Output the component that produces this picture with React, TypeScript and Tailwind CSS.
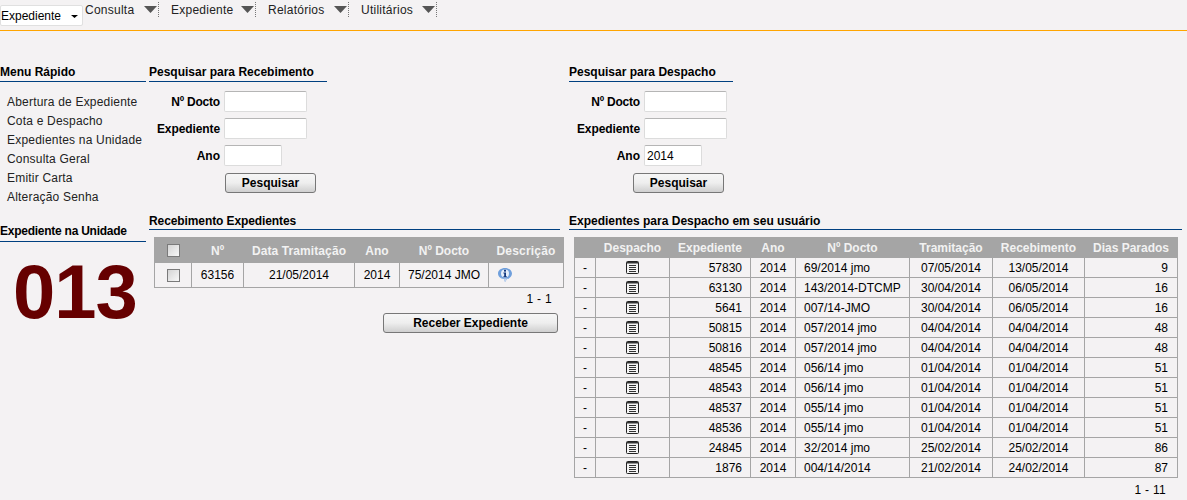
import React from "react"

const menus = [
  { label: "Consulta", w: "w-[74px]", ml: "ml-[2px]" },
  { label: "Expediente", w: "w-[85px]", ml: "ml-[12px]" },
  { label: "Relatórios", w: "w-[81px]", ml: "ml-[12px]" },
  { label: "Utilitários", w: "w-[76px]", ml: "ml-[12px]" },
]

const quickLinks = [
  "Abertura de Expediente",
  "Cota e Despacho",
  "Expedientes na Unidade",
  "Consulta Geral",
  "Emitir Carta",
  "Alteração Senha",
]

const despachos = [
  ["57830", "2014", "69/2014 jmo", "07/05/2014", "13/05/2014", "9"],
  ["63130", "2014", "143/2014-DTCMP", "30/04/2014", "06/05/2014", "16"],
  ["5641", "2014", "007/14-JMO", "30/04/2014", "06/05/2014", "16"],
  ["50815", "2014", "057/2014 jmo", "04/04/2014", "04/04/2014", "48"],
  ["50816", "2014", "057/2014 jmo", "04/04/2014", "04/04/2014", "48"],
  ["48545", "2014", "056/14 jmo", "01/04/2014", "01/04/2014", "51"],
  ["48543", "2014", "056/14 jmo", "01/04/2014", "01/04/2014", "51"],
  ["48537", "2014", "055/14 jmo", "01/04/2014", "01/04/2014", "51"],
  ["48536", "2014", "055/14 jmo", "01/04/2014", "01/04/2014", "51"],
  ["24845", "2014", "32/2014 jmo", "25/02/2014", "25/02/2014", "86"],
  ["1876", "2014", "004/14/2014", "21/02/2014", "24/02/2014", "87"],
]

function Caret() {
  return (
    <svg width="13" height="7" viewBox="0 0 13 7">
      <path d="M0 0H13L6.5 7Z" fill="#555" />
    </svg>
  )
}

function DocIcon() {
  return (
    <svg width="13" height="13" viewBox="0 0 13 13" className="mx-auto block">
      <rect x="0.5" y="0.5" width="12" height="12" rx="1" fill="#f4f4f4" stroke="#222" />
      <rect x="1" y="1" width="11" height="1.5" fill="#333" />
      <path d="M3 4.5H10M3 6.5H10M3 8.5H10M3 10.5H10" stroke="#333" strokeWidth="1" />
    </svg>
  )
}

function InfoIcon() {
  return (
    <svg width="16" height="16" viewBox="0 0 16 16" className="block">
      <path d="M8 1C12 1 15 3.4 15 6.6C15 9.6 12.4 11.6 10 12L8 15L7 12C3.6 11.8 1 9.6 1 6.6C1 3.4 4 1 8 1Z" fill="#6f9fdc" />
      <path d="M3 10C5 12 11 12 13 10L10 12L8 15L7 12Z" fill="#c3d6ef" />
      <circle cx="8" cy="6.4" r="4" fill="#e6eef9" />
      <rect x="7" y="2.8" width="2" height="1.8" fill="#12387f" />
      <path d="M6.4 5.4H9V9.2H9.8V10.2H6.4V9.2H7.2V6.4H6.4Z" fill="#12387f" />
    </svg>
  )
}

function Check() {
  return (
    <input
      type="checkbox"
      className="block mx-auto h-[13px] w-[13px] appearance-none border border-[#7a7a7a] bg-gradient-to-br from-[#d4d4d4] to-[#f8f8f8]"
    />
  )
}

function Button({ label, className }: { label: string; className: string }) {
  return (
    <button className={`h-[20px] rounded-[3px] border border-[#777] bg-gradient-to-b from-[#f6f6f6] via-[#eeeeee] to-[#cfcfcf] text-[12px] font-bold text-black ${className}`}>
      {label}
    </button>
  )
}

function SearchForm({ ano, buttonClass }: { ano?: string; buttonClass: string }) {
  return (
    <div className="mt-[9px]">
      <div className="grid grid-cols-[71px_auto] justify-start gap-x-[4px] gap-y-[6px] items-center">
        <label className="text-right font-bold tracking-[-0.2px]">Nº Docto</label>
        <input readOnly className="h-[21px] w-[83px] rounded-[2px] border border-[#dcdcdc] border-t-[#b5b5b5] bg-white px-[2px] outline-none" />
        <label className="text-right font-bold tracking-[-0.1px]">Expediente</label>
        <input readOnly className="h-[21px] w-[83px] rounded-[2px] border border-[#dcdcdc] border-t-[#b5b5b5] bg-white px-[2px] outline-none" />
        <label className="text-right font-bold">Ano</label>
        <input readOnly value={ano ?? ""} className="h-[21px] w-[58px] rounded-[2px] border border-[#dcdcdc] border-t-[#b5b5b5] bg-white px-[2px] text-[12px] outline-none" />
      </div>
      <Button label="Pesquisar" className={`mt-[7px] block w-[91px] ${buttonClass}`} />
    </div>
  )
}

export default function App() {
  return (
    <div className="h-[500px] overflow-hidden bg-[#f4f2f3] text-[12px] leading-[14px] text-black font-['Liberation_Sans',Arial,sans-serif]">
      <nav className="flex h-[31px] border-b border-[#ffa500] pt-[2px]">
        <div className="relative mt-[3px] h-[21px] w-[83px] rounded-[2px] border border-[#e0e0e0] bg-white pt-[3px]">
          Expediente
          <svg width="7" height="3" viewBox="0 0 7 3" className="absolute right-[4px] top-[9px]">
            <path d="M0 0H7L3.5 3Z" fill="#000" />
          </svg>
        </div>
        {menus.map((m) => (
          <div
            key={m.label}
            className={`flex h-[15px] items-center justify-between border-r border-dotted border-[#777] pr-[1px] ${m.w} ${m.ml}`}
          >
            <span className="tracking-[0.25px] text-[#222]">{m.label}</span>
            <Caret />
          </div>
        ))}
      </nav>

      <main className="flex">
        <aside className="w-[146px] shrink-0 pt-[33px]">
          <h2 className="h-[18px] border-b border-[#004080] pt-[1px] font-bold">Menu Rápido</h2>
          <ul className="mt-[11px] pl-[7px] tracking-[0.2px]">
            {quickLinks.map((l) => (
              <li key={l} className="h-[19px] leading-[19px] whitespace-nowrap text-[#222]">{l}</li>
            ))}
          </ul>
          <h2 className="mt-[16px] h-[19px] border-b border-[#004080] pt-[1px] font-bold tracking-[-0.25px] whitespace-nowrap">Expediente na Unidade</h2>
          <div className="mt-[12px] pl-[13px] text-[76px] leading-[76px] font-bold tracking-[-1px] text-[#660000]">013</div>
        </aside>

        <section className="ml-[3px] w-[414px] shrink-0 pt-[33px]">
          <h2 className="h-[18px] w-[178px] border-b border-[#004080] pt-[1px] font-bold">Pesquisar para Recebimento</h2>
          <SearchForm buttonClass="ml-[76px]" />
          <h2 className="mt-[20px] h-[17px] w-[411px] border-b border-[#004080] pt-[1px] font-bold tracking-[-0.1px]">Recebimento Expedientes</h2>
          <table className="mt-[7px] ml-[5px] w-[409px] table-fixed border-collapse text-center">
            <colgroup>
              <col className="w-[37px]" />
              <col className="w-[52px]" />
              <col className="w-[111px]" />
              <col className="w-[45px]" />
              <col className="w-[89px]" />
              <col className="w-[75px]" />
            </colgroup>
            <thead>
              <tr className="h-[25px] bg-[#a5a5a5] font-bold text-[#f2f2f2]">
                <th className="border border-[#a5a5a5]"><Check /></th>
                <th className="border border-[#a5a5a5] pt-[1px]">Nº</th>
                <th className="border border-[#a5a5a5] pt-[1px] tracking-[0.1px]">Data Tramitação</th>
                <th className="border border-[#a5a5a5] pt-[1px]">Ano</th>
                <th className="border border-[#a5a5a5] pt-[1px]">Nº Docto</th>
                <th className="border border-[#a5a5a5] pt-[1px] tracking-[0.2px]">Descrição</th>
              </tr>
            </thead>
            <tbody>
              <tr className="h-[25px]">
                <td className="border border-[#a5a5a5]"><Check /></td>
                <td className="border border-[#a5a5a5]">63156</td>
                <td className="border border-[#a5a5a5]">21/05/2014</td>
                <td className="border border-[#a5a5a5]">2014</td>
                <td className="border border-[#a5a5a5] whitespace-nowrap">75/2014 JMO</td>
                <td className="border border-[#a5a5a5] pl-[8px]"><InfoIcon /></td>
              </tr>
            </tbody>
          </table>
          <p className="mt-[4px] w-[403px] text-right tracking-[0.3px]">1 - 1</p>
          <Button label="Receber Expediente" className="ml-[234px] mt-[7px] block w-[175px]" />
        </section>

        <section className="ml-[6px] w-[613px] shrink-0 pt-[33px]">
          <h2 className="h-[18px] w-[164px] border-b border-[#004080] pt-[1px] font-bold">Pesquisar para Despacho</h2>
          <SearchForm ano="2014" buttonClass="ml-[64px]" />
          <h2 className="mt-[20px] h-[17px] border-b border-[#004080] pt-[1px] font-bold">Expedientes para Despacho em seu usuário</h2>
          <table className="mt-[7px] ml-[5px] w-[603px] table-fixed border-collapse">
            <colgroup>
              <col className="w-[21px]" />
              <col className="w-[74px]" />
              <col className="w-[81px]" />
              <col className="w-[45px]" />
              <col className="w-[114px]" />
              <col className="w-[83px]" />
              <col className="w-[92px]" />
              <col className="w-[93px]" />
            </colgroup>
            <thead>
              <tr className="h-[20px] bg-[#a5a5a5] text-center font-bold text-[#f2f2f2]">
                <th className="border border-[#a5a5a5]"></th>
                <th className="border border-[#a5a5a5] pt-[1px]">Despacho</th>
                <th className="border border-[#a5a5a5] pt-[1px]">Expediente</th>
                <th className="border border-[#a5a5a5] pt-[1px]">Ano</th>
                <th className="border border-[#a5a5a5] pt-[1px]">Nº Docto</th>
                <th className="border border-[#a5a5a5] pt-[1px]">Tramitação</th>
                <th className="border border-[#a5a5a5] pt-[1px]">Recebimento</th>
                <th className="border border-[#a5a5a5] pt-[1px]">Dias Parados</th>
              </tr>
            </thead>
            <tbody>
              {despachos.map((d, i) => (
                <tr key={i} className="h-[20px]">
                  <td className="border border-[#a5a5a5] text-center">-</td>
                  <td className="border border-[#a5a5a5]"><DocIcon /></td>
                  <td className="border border-[#a5a5a5] pr-[8px] text-right">{d[0]}</td>
                  <td className="border border-[#a5a5a5] text-center">{d[1]}</td>
                  <td className="border border-[#a5a5a5] pl-[8px] whitespace-nowrap">{d[2]}</td>
                  <td className="border border-[#a5a5a5] text-center">{d[3]}</td>
                  <td className="border border-[#a5a5a5] text-center">{d[4]}</td>
                  <td className="border border-[#a5a5a5] pr-[9px] text-right">{d[5]}</td>
                </tr>
              ))}
            </tbody>
          </table>
          <p className="mt-[5px] w-[597px] text-right tracking-[0.3px]">1 - 11</p>
        </section>
      </main>
    </div>
  )
}
